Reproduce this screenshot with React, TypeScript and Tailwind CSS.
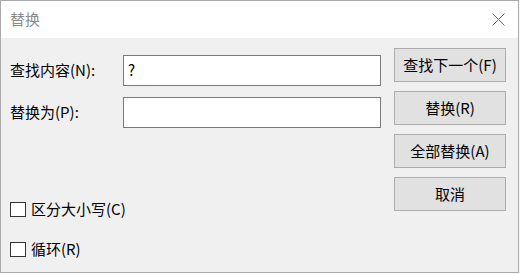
import React from "react";

const font = { fontFamily: '"Noto Sans CJK SC", "Noto Sans", sans-serif' };

const Btn = ({ children }: { children: React.ReactNode }) => (
  <button
    type="button"
    className="flex h-[34px] w-[112px] items-center justify-center border border-[#adadad] bg-[#e1e1e1] text-[15px] text-black"
  >
    {children}
  </button>
);

const Check = ({ label }: { label: string }) => (
  <label className="flex h-[20px] items-center gap-[5px] text-[15px] leading-[20px] text-black">
    <span className="block h-[15px] w-[16px] border border-[#333] bg-white" />
    {label}
  </label>
);

export default function App() {
  return (
    <div className="h-[274px] w-[520px] bg-[#f7f7f7]" style={font}>
      <div className="flex h-[273px] w-[519px] flex-col border border-[#aaaaaa]">
        {/* title bar */}
        <div className="flex h-[37px] items-center justify-between bg-white pl-[9px] pr-[13px]">
          <span className="text-[15px] text-[#8c8c8c]">替换</span>
          <svg width="13" height="13" viewBox="0 0 13 13">
            <path d="M0.5 0.5 L12.5 12.5 M12.5 0.5 L0.5 12.5" stroke="#666" strokeWidth="1" fill="none" />
          </svg>
        </div>

        {/* body */}
        <div className="flex flex-1 bg-[#f0f0f0]">
          <div className="flex flex-1 flex-col pl-[9px]">
            <div className="mt-[17px] flex items-center">
              <span className="w-[113px] text-[15px] text-black">查找内容(N):</span>
              <div className="flex h-[31px] w-[258px] items-center border border-[#7a7a7a] bg-white px-[4px] text-[15px] text-black">
                ?
              </div>
            </div>
            <div className="mt-[11px] flex items-center">
              <span className="w-[113px] text-[15px] text-black">替换为(P):</span>
              <div className="h-[31px] w-[258px] border border-[#7a7a7a] bg-white" />
            </div>
            <div className="mt-[71px] flex flex-col gap-[20px]">
              <Check label="区分大小写(C)" />
              <Check label="循环(R)" />
            </div>
          </div>
          <div className="flex flex-col gap-[9px] pr-[12px] pt-[10px]">
            <Btn>查找下一个(F)</Btn>
            <Btn>替换(R)</Btn>
            <Btn>全部替换(A)</Btn>
            <Btn>取消</Btn>
          </div>
        </div>
      </div>
    </div>
  );
}
